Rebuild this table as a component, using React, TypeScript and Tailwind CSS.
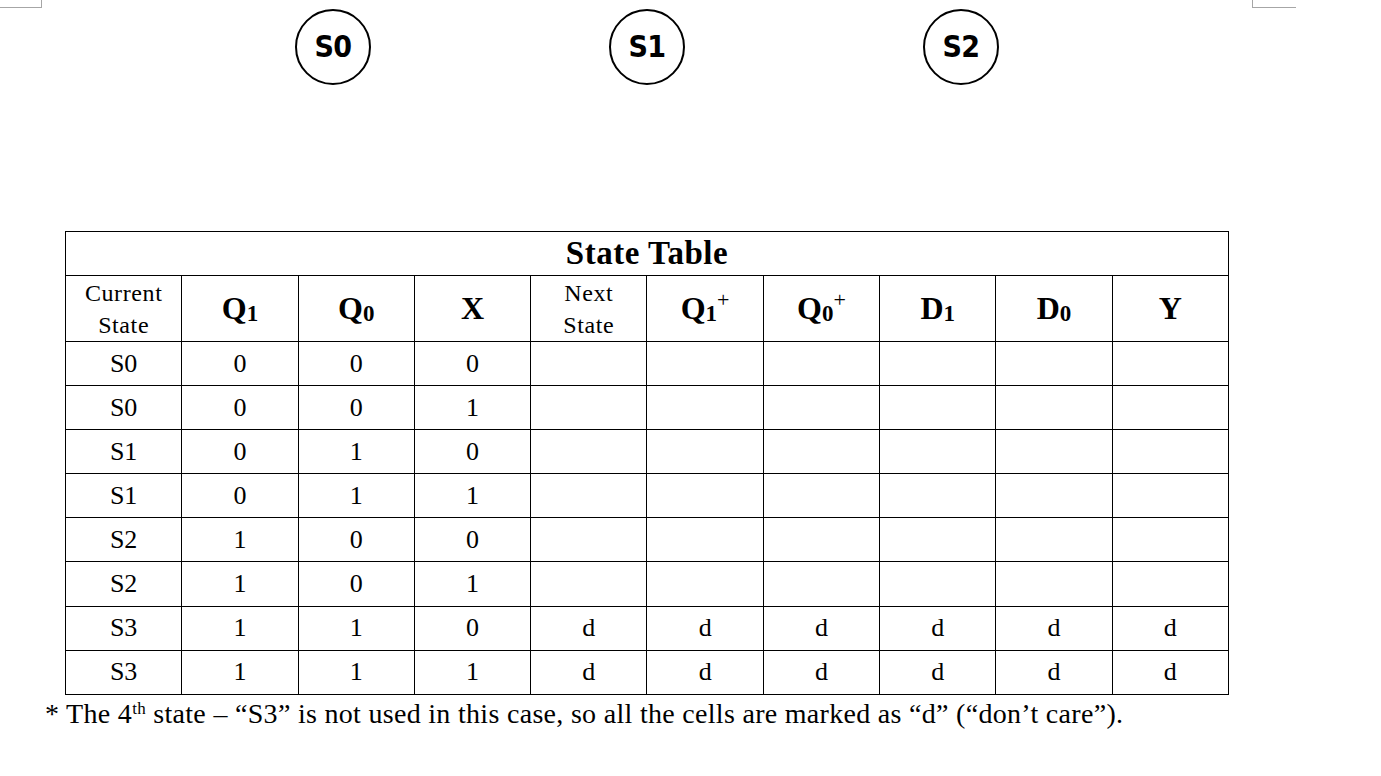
const serif = "font-['Liberation_Serif','Times_New_Roman',serif]";

type Row = { state: string; q1: string; q0: string; x: string; dc: boolean };

const rows: Row[] = [
  { state: "S0", q1: "0", q0: "0", x: "0", dc: false },
  { state: "S0", q1: "0", q0: "0", x: "1", dc: false },
  { state: "S1", q1: "0", q0: "1", x: "0", dc: false },
  { state: "S1", q1: "0", q0: "1", x: "1", dc: false },
  { state: "S2", q1: "1", q0: "0", x: "0", dc: false },
  { state: "S2", q1: "1", q0: "0", x: "1", dc: false },
  { state: "S3", q1: "1", q0: "1", x: "0", dc: true },
  { state: "S3", q1: "1", q0: "1", x: "1", dc: true },
];

function Sym({ base, sub, plus }: { base: string; sub?: string; plus?: boolean }) {
  return (
    <span className="inline-flex items-baseline text-[32px] font-bold leading-none">
      {base}
      {sub && <span className="relative top-[2px] text-[23px]">{sub}</span>}
      {plus && <span className="relative -top-[12px] text-[22px] font-normal">+</span>}
    </span>
  );
}

function StateCircle({ label }: { label: string }) {
  return (
    <div className="flex h-[76px] w-[76px] items-center justify-center rounded-full border-2 border-black">
      <span className="font-['DejaVu_Sans_Condensed','DejaVu_Sans',sans-serif] text-[30px] font-bold leading-none tracking-[-0.5px] text-black">
        {label}
      </span>
    </div>
  );
}

export default function App() {
  const cell = "border border-black p-0 text-center align-middle";
  const label = `${cell} text-[24px] leading-[32px] tracking-[0.6px]`;
  const heads = [
    <Sym key="q1" base="Q" sub="1" />,
    <Sym key="q0" base="Q" sub="0" />,
    <Sym key="x" base="X" />,
  ];
  const tail = [
    <Sym key="q1p" base="Q" sub="1" plus />,
    <Sym key="q0p" base="Q" sub="0" plus />,
    <Sym key="d1" base="D" sub="1" />,
    <Sym key="d0" base="D" sub="0" />,
    <Sym key="y" base="Y" />,
  ];

  return (
    <div className={`h-[776px] w-[1381px] overflow-hidden bg-white text-black ${serif}`}>
      <div className="flex h-[8px] justify-between">
        <div className="w-[42px] border-b border-r border-[#a6a6a6]" />
        <div className="mr-[85px] w-[44px] border-b border-l border-[#a6a6a6]" />
      </div>

      <div className="mt-[1px] flex gap-[238px] pl-[295px]">
        <StateCircle label="S0" />
        <StateCircle label="S1" />
        <StateCircle label="S2" />
      </div>

      <table className="ml-[65px] mt-[146px] w-[1164px] table-fixed border-collapse border border-black">
        <tbody>
          <tr className="h-[44px]">
            <td colSpan={10} className={`${cell} text-[33px] font-bold leading-none tracking-[0.5px]`}>
              State Table
            </td>
          </tr>
          <tr className="h-[66px]">
            <td className={label}>
              Current
              <br />
              State
            </td>
            {heads.map((h, i) => (
              <td key={i} className={cell}>
                {h}
              </td>
            ))}
            <td className={label}>
              Next
              <br />
              State
            </td>
            {tail.map((h, i) => (
              <td key={i} className={cell}>
                {h}
              </td>
            ))}
          </tr>
          {rows.map((r, idx) => (
            <tr key={idx} className="h-[44.1px] text-[26px] leading-none">
              <td className={cell}>{r.state}</td>
              <td className={cell}>{r.q1}</td>
              <td className={cell}>{r.q0}</td>
              <td className={cell}>{r.x}</td>
              {Array.from({ length: 6 }).map((_, i) => (
                <td key={i} className={cell}>
                  {r.dc ? "d" : ""}
                </td>
              ))}
            </tr>
          ))}
        </tbody>
      </table>

      <p className="ml-[45px] text-[28px] leading-[38px] tracking-[0.3px]">
        * The 4<sup className="text-[17px]">th</sup> state – “S3” is not used in this case, so all the cells are
        marked as “d” (“don’t care”).
      </p>
    </div>
  );
}
